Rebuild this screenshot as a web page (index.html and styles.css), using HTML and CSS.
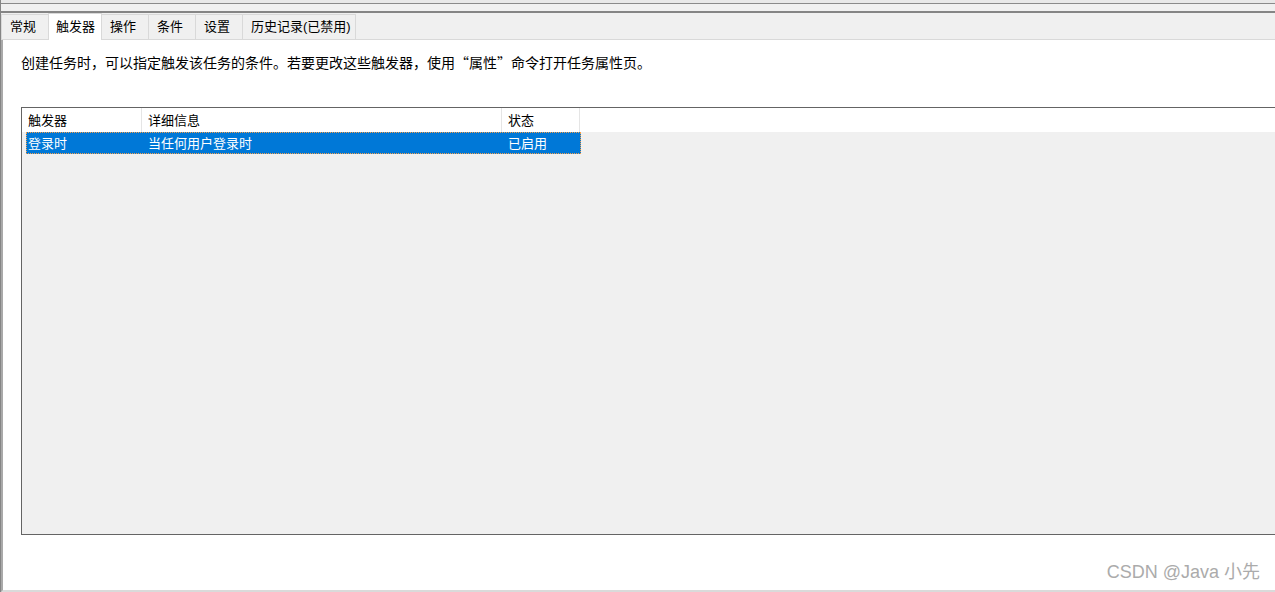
FILE: index.html
```html
<!DOCTYPE html>
<html lang="zh-CN">
  <head>
    <meta charset="UTF-8" />
    <meta name="viewport" content="width=device-width, initial-scale=1.0" />
    <title>触发器</title>
    <link rel="stylesheet" href="styles.css">
  </head>
  <body>
    <div class="frame">
      <div class="top-strip"></div>
      <div class="top-gap"></div>

      <ul class="tabs">
        <li class="tab">常规</li>
        <li class="tab selected">触发器</li>
        <li class="tab">操作</li>
        <li class="tab">条件</li>
        <li class="tab">设置</li>
        <li class="tab">历史记录(已禁用)</li>
      </ul>

      <div class="panel">
        <p class="desc">创建任务时，可以指定触发该任务的条件。若要更改这些触发器，使用“属性”命令打开任务属性页。</p>

        <div class="list">
          <div class="list-head">
            <div class="col col-name">触发器</div>
            <div class="col col-detail">详细信息</div>
            <div class="col col-state">状态</div>
          </div>
          <div class="list-row selected">
            <div class="cell cell-name">登录时</div>
            <div class="cell cell-detail">当任何用户登录时</div>
            <div class="cell cell-state">已启用</div>
          </div>
        </div>
      </div>

      <div class="watermark">CSDN @Java 小先</div>
    </div>
  </body>
</html>
```

FILE: styles.css
```css
* {
  margin: 0;
  padding: 0;
  box-sizing: border-box;
}

body {
  background-color: #ffffff;
  overflow: hidden;
  font-family: "Noto Sans CJK SC", "Microsoft YaHei", sans-serif;
  color: #000000;
}

.frame {
  position: relative;
  height: 592px;
  border-left: 1px solid #858585;
}

/* top of the window */
.top-strip {
  height: 4px;
  background-color: #e8e8e8;
  border-bottom: 1px solid #8a8a8a;
}

.top-gap {
  height: 9px;
  background-color: #f0f0f0;
  border-bottom: 2px solid #858585;
}

/* tab strip */
.tabs {
  display: flex;
  align-items: flex-end;
  list-style: none;
  height: 27px;
  background-color: #f0f0f0;
  border-bottom: 1px solid #d9d9d9;
}

.tab {
  height: 25px;
  min-width: 48px;
  padding: 0 4px 0 8px;
  border: 1px solid #d9d9d9;
  border-bottom: none;
  background-color: #f0f0f0;
  font-family: "Liberation Sans", "Noto Sans CJK SC", sans-serif;
  font-size: 13px;
  line-height: 24px;
  white-space: nowrap;
}

.tab + .tab {
  margin-left: -1px;
}

.tab.selected {
  position: relative;
  z-index: 1;
  height: 27px;
  margin-bottom: -1px;
  padding: 1px 6px 0 7px;
  background-color: #ffffff;
}

/* content panel */
.panel {
  height: 552px;
  border-left: 2px solid #a9a9a9;
  border-bottom: 2px solid #dadada;
  padding: 12px 0 0 18px;
}

.desc {
  font-size: 14px;
  line-height: 20px;
}

.list {
  margin-top: 35px;
  margin-right: -30px;
  height: 428px;
  border: 1px solid #646464;
  background-color: #f0f0f0;
}

.list-head {
  display: flex;
  height: 24px;
  background-color: #ffffff;
}

.col {
  padding-left: 6px;
  font-size: 13px;
  line-height: 24px;
  border-right: 1px solid #e5e5e5;
}

.col-name {
  width: 120px;
}

.col-detail {
  width: 360px;
}

.col-state {
  width: 78px;
}

.list-row {
  display: flex;
  width: 555px;
  height: 22px;
  margin-left: 4px;
  font-size: 13px;
  line-height: 20px;
}

.list-row.selected {
  background-color: #0078d7;
  color: #ffffff;
  border: 1px dotted #f5a04c;
}

.cell {
  padding-left: 6px;
}

.cell-name {
  width: 115px;
  padding-left: 1px;
}

.cell-detail {
  width: 360px;
}

.watermark {
  position: absolute;
  right: 15px;
  top: 561px;
  font-family: "Liberation Sans", "Noto Sans CJK SC", sans-serif;
  font-size: 18px;
  line-height: 22px;
  color: #ababab;
}
```
